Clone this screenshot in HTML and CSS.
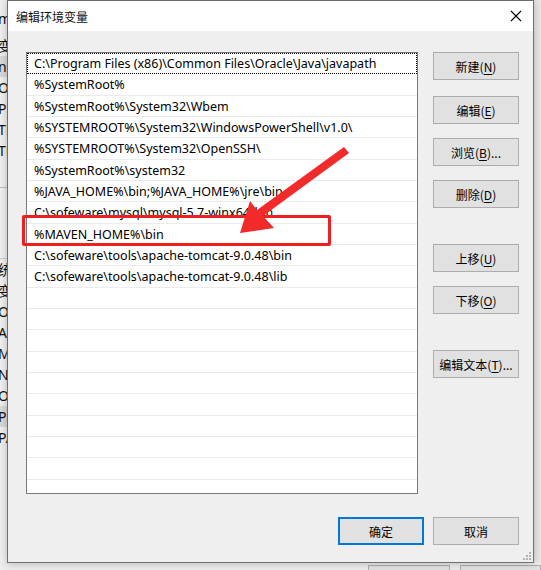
FILE: index.html
```html
<!DOCTYPE html>
<html lang="zh">
<head>
<meta charset="utf-8">
<link rel="stylesheet" href="styles.css">
</head>
<body>
<div class="desk">
  <div class="bgwin">
    <div class="bgrow">m</div>
    <div class="bgrow gap">变</div>
    <div class="bgrow sel">n</div>
    <div class="bgrow">O</div>
    <div class="bgrow">Pa</div>
    <div class="bgrow">TE</div>
    <div class="bgrow">TM</div>
    <div class="bgsep"></div>
    <div class="bgsep2"></div>
    <div class="bgrow">统</div>
    <div class="bgrow">变</div>
    <div class="bgrow">O</div>
    <div class="bgrow">A</div>
    <div class="bgrow">M</div>
    <div class="bgrow">N</div>
    <div class="bgrow">O</div>
    <div class="bgrow sel">Pa</div>
    <div class="bgrow">PA</div>
  </div>
  <div class="bgright"></div>
  <div class="bgbottom"><span class="bgbtn"></span><span class="bgbtn"></span></div>

  <div class="dialog">
    <div class="titlebar">
      <span class="title">编辑环境变量</span>
      <svg class="close" width="12" height="12" viewBox="0 0 12 12"><path d="M1 1L11 11M11 1L1 11" stroke="#000" stroke-width="1.1" fill="none"/></svg>
    </div>
    <div class="body">
      <div class="main">
        <div class="list">
          <div class="row focus">C:\Program Files (x86)\Common Files\Oracle\Java\javapath</div>
          <div class="row">%SystemRoot%</div>
          <div class="row">%SystemRoot%\System32\Wbem</div>
          <div class="row">%SYSTEMROOT%\System32\WindowsPowerShell\v1.0\</div>
          <div class="row">%SYSTEMROOT%\System32\OpenSSH\</div>
          <div class="row">%SystemRoot%\system32</div>
          <div class="row">%JAVA_HOME%\bin;%JAVA_HOME%\jre\bin</div>
          <div class="row">C:\sofeware\mysql\mysql-5.7-winx64\bin</div>
          <div class="row">%MAVEN_HOME%\bin</div>
          <div class="row">C:\sofeware\tools\apache-tomcat-9.0.48\bin</div>
          <div class="row">C:\sofeware\tools\apache-tomcat-9.0.48\lib</div>
          <div class="row"></div>
          <div class="row"></div>
          <div class="row"></div>
          <div class="row"></div>
          <div class="row"></div>
          <div class="row"></div>
          <div class="row"></div>
          <div class="row"></div>
          <div class="row"></div>
        </div>
        <div class="side">
          <button class="btn b1">新建(<u>N</u>)</button>
          <button class="btn b2">编辑(<u>E</u>)</button>
          <button class="btn b3">浏览(<u>B</u>)...</button>
          <button class="btn b3">删除(<u>D</u>)</button>
          <button class="btn b4">上移(<u>U</u>)</button>
          <button class="btn b3">下移(<u>O</u>)</button>
          <button class="btn b4">编辑文本(<u>T</u>)...</button>
        </div>
      </div>
      <div class="footer">
        <button class="btn primary">确定</button>
        <button class="btn">取消</button>
      </div>
    </div>
    <svg class="grip" width="8" height="8" viewBox="0 0 8 8" fill="#b5b5b5">
      <rect x="6" y="0" width="2" height="2"/>
      <rect x="3" y="3" width="2" height="2"/><rect x="6" y="3" width="2" height="2"/>
      <rect x="0" y="6" width="2" height="2"/><rect x="3" y="6" width="2" height="2"/><rect x="6" y="6" width="2" height="2"/>
    </svg>
  </div>

  <div class="mark"></div>
  <svg class="arrow" width="541" height="570" viewBox="0 0 541 570">
    <polygon fill="#f22a2a" points="344,147 349,153 263,216 274,228 240,233 250,201 257,210"/>
  </svg>
</div>
</body>
</html>
```
FILE: styles.css
```css
* { box-sizing: border-box; }
html, body { margin: 0; padding: 0; }
body {
  width: 541px;
  height: 570px;
  overflow: hidden;
  background: #c9c9c9;
  font-family: "Noto Sans", "Noto Sans CJK SC", sans-serif;
  font-size: 12px;
  color: #000;
}
.desk { position: relative; width: 541px; height: 570px; overflow: hidden; background: #f0f0f0; }

.bgwin {
  position: absolute;
  left: 0; top: 0;
  width: 8px; height: 570px;
  background: #f0f0f0;
  overflow: hidden;
  padding-top: 8px;
  font-size: 14px;
  color: #111;
}
.bgrow { height: 21px; line-height: 21px; white-space: nowrap; margin-left: -2px; }
.bgrow.gap { margin-top: 6px; }
.bgrow.sel { background: #d9d9d9; }
.bgsep { height: 1px; background: #bdbdbd; margin-top: 26px; }
.bgsep2 { height: 1px; background: #cfcfcf; margin-top: 70px; }
.bgright { position: absolute; right: 0; top: 0; width: 8px; height: 570px; background: #e8e8e8; border-left: 1px solid #d0d0d0; }
.bgbottom { position: absolute; left: 0; bottom: 0; width: 541px; height: 8px; background: #ececec; display: flex; padding-left: 368px; gap: 10px; }
.bgbtn { width: 86px; height: 12px; margin-top: 3px; border: 1px solid #adadad; background: #e1e1e1; }

.dialog {
  position: absolute;
  left: 7px; top: 0;
  width: 527px; height: 563px;
  background: #efefef;
  border: 1px solid #6f6f6f;
  box-shadow: 0 0 8px rgba(0,0,0,0.25);
  display: flex;
  flex-direction: column;
}
.titlebar {
  height: 30px;
  background: #fff;
  display: flex;
  align-items: center;
  justify-content: space-between;
  padding: 0 11px 0 8px;
  flex: none;
}
.title { font-family: "Noto Sans CJK SC", sans-serif; font-size: 12px; color: #111; padding-top: 1px; }
.close { display: block; }
.body { flex: 1; display: flex; flex-direction: column; padding: 21px 14px 0 18px; }
.main { display: flex; gap: 15px; }
.list {
  width: 392px; height: 442px;
  background: #fff;
  border: 1px solid #7a7a7a;
  overflow: hidden;
}
.row {
  height: 21.33px;
  line-height: 21px;
  padding-left: 7px;
  border-bottom: 1px solid #ebebeb;
  white-space: nowrap;
  font-family: "Noto Sans", "Noto Sans CJK SC", sans-serif;
  font-size: 12.5px;
  color: #000;
}
.row.focus { outline: 1px dotted #000; outline-offset: -1px; }
.side { display: flex; flex-direction: column; padding-top: 0; }
.btn {
  width: 86px; height: 28px;
  border: 1px solid #adadad;
  background: #e1e1e1;
  font-family: "Noto Sans CJK SC", sans-serif;
  font-size: 12px;
  color: #000;
  padding: 0;
  display: flex; align-items: center; justify-content: center;
}
.btn u { text-underline-offset: 2px; }
.b1 { margin-top: 0; }
.b2 { margin-top: 16px; }
.b3 { margin-top: 14px; }
.b4 { margin-top: 36px; }
.footer { display: flex; justify-content: flex-end; gap: 9px; margin-top: 23px; }
.btn.primary { border: 2px solid #0078d7; }
.grip { position: absolute; right: 2px; bottom: 2px; }

.mark {
  position: absolute;
  left: 22px; top: 215px;
  width: 309px; height: 31px;
  border: 3px solid #f01e1e;
  border-radius: 2px;
}
.arrow { position: absolute; left: 0; top: 0; }
```
